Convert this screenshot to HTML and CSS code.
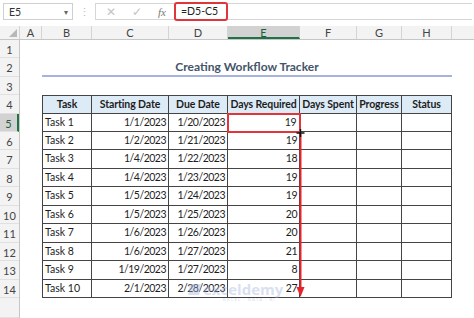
FILE: index.html
```html
<!DOCTYPE html>
<html lang="en">
<head>
  <meta charset="UTF-8" />
  <title>Creating Workflow Tracker</title>
  <link rel="stylesheet" href="styles.css">
</head>
<body>
  <div class="toolbar">
    <div class="name-box">
      <span>E5</span>
      <span class="caret">&#9662;</span>
    </div>
    <div class="grip">&#8942;</div>
    <div class="formula-bar">
      <span class="fb-icon">&#10005;</span>
      <span class="fb-icon">&#10003;</span>
      <span class="fb-icon fx">fx</span>
      <span class="formula">=D5-C5</span>
    </div>
  </div>

  <div class="sheet">
    <div class="col-heads">
      <div class="corner"></div>
      <div class="ch w-a">A</div>
      <div class="ch w-b">B</div>
      <div class="ch w-c">C</div>
      <div class="ch w-d">D</div>
      <div class="ch w-e active">E</div>
      <div class="ch w-f">F</div>
      <div class="ch w-g">G</div>
      <div class="ch w-h">H</div>
      <div class="ch rest"></div>
    </div>

    <div class="body">
      <div class="row-heads">
        <div class="rh">1</div>
        <div class="rh">2</div>
        <div class="rh">3</div>
        <div class="rh">4</div>
        <div class="rh active">5</div>
        <div class="rh">6</div>
        <div class="rh">7</div>
        <div class="rh">8</div>
        <div class="rh">9</div>
        <div class="rh">10</div>
        <div class="rh">11</div>
        <div class="rh">12</div>
        <div class="rh">13</div>
        <div class="rh">14</div>
        <div class="rh"></div>
      </div>

      <div class="cells">
        <div class="title">Creating Workflow Tracker</div>

        <div class="tracker">
          <div class="th">Task</div>
          <div class="th">Starting Date</div>
          <div class="th">Due Date</div>
          <div class="th">Days Required</div>
          <div class="th">Days Spent</div>
          <div class="th">Progress</div>
          <div class="th">Status</div>

          <div class="td">Task 1</div><div class="td num">1/1/2023</div><div class="td num">1/20/2023</div><div class="td num sel">19</div><div class="td"></div><div class="td"></div><div class="td"></div>
          <div class="td">Task 2</div><div class="td num">1/2/2023</div><div class="td num">1/21/2023</div><div class="td num">19</div><div class="td"></div><div class="td"></div><div class="td"></div>
          <div class="td">Task 3</div><div class="td num">1/4/2023</div><div class="td num">1/22/2023</div><div class="td num">18</div><div class="td"></div><div class="td"></div><div class="td"></div>
          <div class="td">Task 4</div><div class="td num">1/4/2023</div><div class="td num">1/23/2023</div><div class="td num">19</div><div class="td"></div><div class="td"></div><div class="td"></div>
          <div class="td">Task 5</div><div class="td num">1/5/2023</div><div class="td num">1/24/2023</div><div class="td num">19</div><div class="td"></div><div class="td"></div><div class="td"></div>
          <div class="td">Task 6</div><div class="td num">1/5/2023</div><div class="td num">1/25/2023</div><div class="td num">20</div><div class="td"></div><div class="td"></div><div class="td"></div>
          <div class="td">Task 7</div><div class="td num">1/6/2023</div><div class="td num">1/26/2023</div><div class="td num">20</div><div class="td"></div><div class="td"></div><div class="td"></div>
          <div class="td">Task 8</div><div class="td num">1/6/2023</div><div class="td num">1/27/2023</div><div class="td num">21</div><div class="td"></div><div class="td"></div><div class="td"></div>
          <div class="td">Task 9</div><div class="td num">1/19/2023</div><div class="td num">1/27/2023</div><div class="td num">8</div><div class="td"></div><div class="td"></div><div class="td"></div>
          <div class="td">Task 10</div><div class="td num">2/1/2023</div><div class="td num">2/28/2023</div><div class="td num">27</div><div class="td"></div><div class="td"></div><div class="td"></div>
        </div>
      </div>
    </div>
  </div>

  <!-- fill-down arrow drawn over the sheet -->
  <svg class="arrow" width="474" height="318" viewBox="0 0 474 318">
    <line x1="300.5" y1="134" x2="300.5" y2="289" stroke="#e3262c" stroke-width="2"/>
    <polygon points="296.5,287 304.5,287 300.5,297" fill="#e3262c"/>
    <path d="M300.5 129v8M296.5 133h8" stroke="#111" stroke-width="1.4"/>
  </svg>

  <div class="watermark">
    <div class="wm-name"><span class="wm-logo"></span>exceldemy</div>
    <div class="wm-tag">EXCEL · DATA · BI</div>
  </div>
</body>
</html>
```

FILE: styles.css
```css
:root {
  --head-bg: #f3f3f3;
  --head-line: #d4d4d4;
  --head-text: #444;
  --active-bg: #d2d2d2;
  --green: #217346;
  --grid: #444;
  --red: #e0353b;
  --rows: 18px 19px 18px 19px 18px 18px 19px 18px 19px 18px 19px 18px 19px 18px 1fr;
}

* {
  box-sizing: border-box;
  margin: 0;
  padding: 0;
}

html, body {
  width: 474px;
  height: 318px;
  overflow: hidden;
  background: #fff;
  font-family: Lato, 'Liberation Sans', sans-serif;
  font-size: 11px;
  color: #1d1d1d;
}

body {
  position: relative;
}

/* formula toolbar */
.toolbar {
  height: 26px;
  display: flex;
  align-items: flex-start;
  padding-top: 3px;
  padding-left: 3px;
}

.name-box {
  width: 70px;
  height: 17px;
  border: 1px solid #cfcfcf;
  display: flex;
  align-items: center;
  justify-content: space-between;
  padding: 0 4px 0 5px;
  color: #333;
  font-size: 10.5px;
}

.caret {
  font-size: 8px;
  color: #666;
}

.grip {
  width: 22px;
  height: 17px;
  text-align: center;
  line-height: 17px;
  color: #bdbdbd;
}

.formula-bar {
  flex: 1;
  height: 17px;
  margin-right: 2px;
  border: 1px solid #d6d6d6;
  border-right: none;
  display: flex;
  align-items: center;
  padding-left: 10px;
}

.fb-icon {
  width: 26px;
  color: #c4c4c4;
  font-size: 12px;
}

.fx {
  width: 16px;
  font-family: 'Liberation Serif', serif;
  font-style: italic;
  color: #777;
  font-size: 11px;
}

.formula {
  height: 19px;
  margin-top: -1px;
  width: 54px;
  border: 2px solid var(--red);
  border-radius: 3px;
  padding-left: 5px;
  line-height: 15px;
  color: #222;
  font-size: 10.5px;
}

/* column & row headers */
.col-heads {
  display: flex;
  height: 14px;
  background: var(--head-bg);
  border-bottom: 1px solid #c6c6c6;
}

.corner {
  width: 20px;
  position: relative;
  border-right: 1px solid var(--head-line);
}

.corner::after {
  content: "";
  position: absolute;
  right: 2px;
  bottom: 2px;
  border-left: 8px solid transparent;
  border-bottom: 8px solid #b8b8b8;
}

.ch {
  text-align: center;
  line-height: 13px;
  color: var(--head-text);
  border-right: 1px solid var(--head-line);
}

.ch.active {
  background: var(--active-bg);
  border-bottom: 2px solid var(--green);
  color: #1e5e3a;
}

.w-a { width: 22px; }
.w-b { width: 50px; }
.w-c { width: 77px; }
.w-d { width: 59px; }
.w-e { width: 72px; }
.w-f { width: 57px; }
.w-g { width: 45px; }
.w-h { width: 50px; }
.rest { flex: 1; border-right: none; }

.body {
  display: flex;
  height: 278px;
}

.row-heads {
  width: 20px;
  display: grid;
  grid-template-rows: var(--rows);
  background: var(--head-bg);
  border-right: 1px solid #c6c6c6;
}

.rh {
  display: flex;
  align-items: center;
  justify-content: center;
  color: var(--head-text);
  border-bottom: 1px solid #e0e0e0;
  padding-top: 1px;
}

.rh.active {
  background: var(--active-bg);
  border-right: 2px solid var(--green);
  color: #1e5e3a;
}

/* worksheet cells */
.cells {
  flex: 1;
  display: grid;
  grid-template-columns: 22px 410px 1fr;
  grid-template-rows: var(--rows);
}

.title {
  grid-column: 2;
  grid-row: 2;
  text-align: center;
  font-weight: 700;
  font-size: 12px;
  color: #44546a;
  border-bottom: 2px solid #a7b3de;
  line-height: 17px;
}

.tracker {
  grid-column: 2;
  grid-row: 4 / 15;
  display: grid;
  grid-template-columns: 49px 77px 59px 72px 57px 45px 1fr;
  grid-template-rows: 18px 18px 18px 19px 18px 19px 18px 19px 18px 19px 18px;
  border-top: 1px solid var(--grid);
  border-left: 1px solid var(--grid);
  font-size: 10.5px;
}

.th, .td {
  border-right: 1px solid var(--grid);
  border-bottom: 1px solid var(--grid);
  padding: 0 2px;
  line-height: 17px;
  white-space: nowrap;
  overflow: hidden;
}

.th {
  background: #ddebf7;
  font-weight: 700;
  text-align: center;
  letter-spacing: -0.1px;
}

.num {
  text-align: right;
  letter-spacing: -0.5px;
}

.td.sel {
  position: relative;
  z-index: 1;
  overflow: visible;
  outline: 2px solid var(--red);
  outline-offset: -1px;
  padding-right: 3px;
}

/* overlays */
.arrow {
  position: absolute;
  left: 0;
  top: 0;
  pointer-events: none;
  z-index: 5;
}

.watermark {
  position: absolute;
  left: 189px;
  top: 282px;
  opacity: 0.4;
  pointer-events: none;
  z-index: 4;
}

.wm-name {
  display: flex;
  align-items: center;
  gap: 3px;
  font-family: 'Open Sans', sans-serif;
  font-weight: 700;
  font-size: 15px;
  line-height: 15px;
  color: #9fb4de;
}

.wm-logo {
  width: 11px;
  height: 11px;
  background: #9fb4de;
  transform: skewX(-8deg);
}

.wm-tag {
  padding-left: 34px;
  font-size: 4.5px;
  letter-spacing: 1px;
  color: #9fb4de;
}
```
